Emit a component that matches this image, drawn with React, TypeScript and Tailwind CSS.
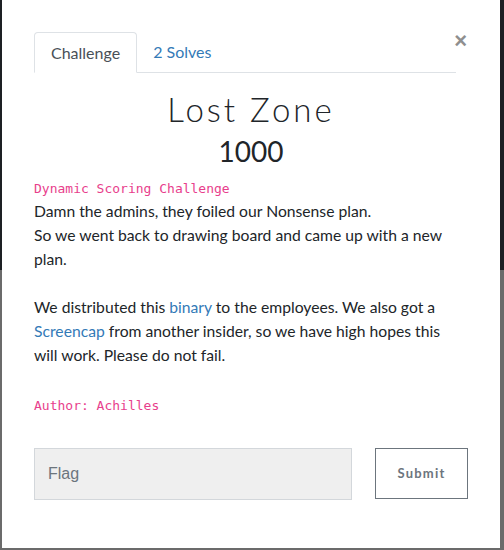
export default function App() {
  return (
    <div className="w-[504px] h-[550px] overflow-hidden bg-[linear-gradient(#1d2024_0_270px,#6b6b6b_270px)] pl-[2px] pr-[4px] pb-[2px]">
      <div className="relative h-full bg-white font-['Lato',sans-serif] text-[#212529]">
        <div className="px-8 pt-[31px]">
          <div className="flex items-end border-b border-[#dee2e6] mr-[12px]">
            <div className="h-[41px] px-4 flex items-center border border-[#dee2e6] border-b-white -mb-px rounded-t-[4px] bg-white text-[16px] text-[#495057]">
              Challenge
            </div>
            <div className="h-[41px] px-4 flex items-center text-[16px] text-[#337ab7]">2 Solves</div>
          </div>
          <button className="absolute right-[33px] top-[30px] text-[22px] font-bold leading-none text-[#8f8f8f] font-['Liberation_Sans',sans-serif]">×</button>

          <h2 className="mt-[16px] text-center text-[33px] leading-[40px] font-light tracking-[3px] text-[#212529]">Lost Zone</h2>
          <div className="mt-[5px] text-center text-[28px] leading-[34px] text-[#212529]">1000</div>

          <div className="mt-[11px] font-['DejaVu_Sans_Mono',monospace] text-[13px] leading-[20px] text-[#e83e8c]">Dynamic Scoring Challenge</div>
          <div className="w-[420px] text-[15.7px] leading-[24px] text-[#212529]">
            <p>
              Damn the admins, they foiled our Nonsense plan.
              <br />
              So we went back to drawing board and came up with a new plan.
            </p>
            <p className="mt-[24px]">
              We distributed this <span className="text-[#337ab7]">binary</span> to the employees. We also got a{' '}
              <span className="text-[#337ab7]">Screencap</span> from another insider, so we have high hopes this will work. Please do not fail.
            </p>
          </div>
          <div className="mt-[29px] font-['DejaVu_Sans_Mono',monospace] text-[13px] leading-[20px] text-[#e83e8c]">Author: Achilles</div>

          <div className="mt-[32px] flex items-start">
            <div className="w-[318px] h-[52px] bg-[#efefef] border border-[#d3d7db] flex items-center px-[13px] font-['Liberation_Sans',sans-serif] text-[16px] text-[#6c757d]">
              Flag
            </div>
            <button className="ml-[23px] w-[93px] h-[51px] border border-[#6c757d] font-['Lato',sans-serif] font-bold text-[13px] tracking-[1.2px] text-[#6c757d]">
              Submit
            </button>
          </div>
        </div>
      </div>
    </div>
  )
}
